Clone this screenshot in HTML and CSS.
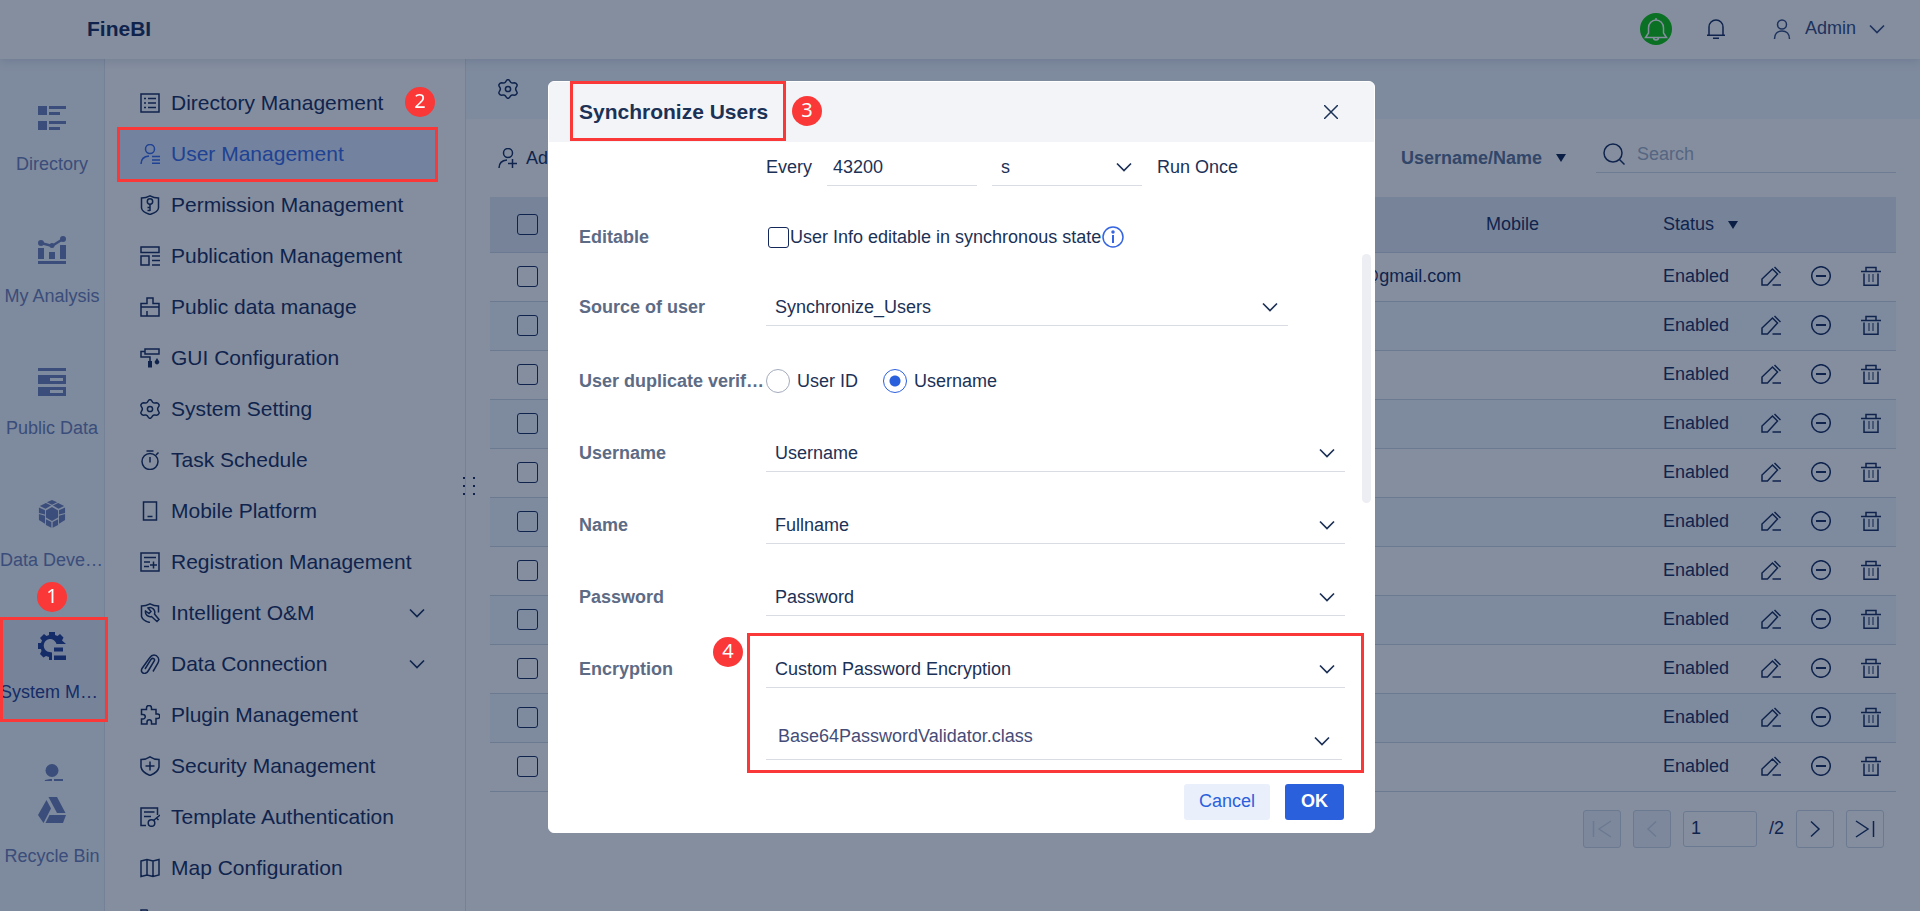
FILE: index.html
```html
<!DOCTYPE html>
<html lang="en">
<head>
    <meta charset="UTF-8">
    <meta name="viewport" content="width=device-width, initial-scale=1.0">
    <title>FineBI</title>
    <link rel="stylesheet" href="styles.css">
</head>
<body>
    <svg class="symbols" aria-hidden="true">
        <symbol id="chevron" viewBox="0 0 16 16"><path d="M1 4.500l7 7 7-7"/></symbol>
        <symbol id="gear" viewBox="0 0 20 20"><path d="M8.600 1.400Q10-.2 11.400 1.400L12.700 3.200q.8.900 2 .8l2-.2q1.600.2 2.300 1.800.4 1-.4 2l-.7 1.200q-.5 1.200 0 2.400l.7 1.200q.8 1 .4 2-.7 1.600-2.300 1.800l-2-.2q-1.200-.1-2 .8l-1.300 1.800Q10 20.200 8.600 18.600L7.300 16.800q-.8-.9-2-.8l-2 .2Q1.700 16 1 14.400q-.4-1 .4-2l.7-1.200q.5-1.200 0-2.400l-.7-1.200q-.8-1-.4-2Q1.700 4 3.300 3.800l2 .2q1.200.1 2-.8z"/><circle cx="10" cy="10" r="2.600"/></symbol>
        <symbol id="edit" viewBox="0 0 20 20"><path d="M1 19v-6L11.500 3l5 5L6.500 19zM13.500 1l6 6M11.500 19H20"/></symbol>
        <symbol id="minus" viewBox="0 0 20 20"><circle cx="10" cy="10" r="9.300"/><path d="M5 10h10" stroke-width="2"/></symbol>
        <symbol id="trash" viewBox="0 0 20 20"><path d="M0 5.500h20M5 5V1.500h10V5M3 7.500v11.700h14V7.500"/><path d="M8 8v8M12 8v8" stroke-width="1"/></symbol>
    </svg>

    <header class="topbar">
        <div class="brand">FineBI</div>
        <button class="icon-button" aria-label="Support">
            <svg class="support-bell" viewBox="0 0 32 32"><circle class="bell-disc" cx="16" cy="16" r="16"/><path d="M16 5v2M8.500 20V15a7.500 8 0 0 1 15 0v5l3 4.500h-21zM13.500 24.500a2.500 2.500 0 0 0 5 0"/></svg>
        </button>
        <button class="icon-button" aria-label="Notifications">
            <svg class="icon" viewBox="0 0 20 20"><path d="M3 16V8a7 7 0 0 1 14 0v8M1 16.300h18M7 19.300h6"/></svg>
        </button>
        <button class="icon-button account">
            <svg class="icon" viewBox="0 0 20 20"><circle cx="10" cy="5.500" r="4.500"/><path d="M2.500 20c0-5 3-8 7.500-8s7.500 3 7.500 8"/></svg>
            <span>Admin</span>
            <svg class="chevron"><use href="#chevron"/></svg>
        </button>
    </header>

    <div class="workspace">
        <nav class="rail">
            <div class="rail-items">
                <a class="rail-item" href="#">
                    <svg class="rail-icon" viewBox="0 0 28 28"><path d="M0 2h9v9H0zM11 2h17v3H11zM11 8h11v3H11zM0 17h9v9H0zM11 17h17v3H11zM11 23h11v3H11z"/></svg>
                    <span>Directory</span>
                </a>
                <a class="rail-item" href="#">
                    <svg class="rail-icon" viewBox="0 0 28 28"><path d="M0 12h6v11H0zM11 16h6v7h-6zM22 9h6v14h-6zM0 25h28v3H0z"/><circle cx="3" cy="7" r="3"/><circle cx="14" cy="9.500" r="2.500"/><circle cx="25" cy="3" r="3"/><path class="rail-line" d="M3 7l11 3L25 3"/></svg>
                    <span>My Analysis</span>
                </a>
                <a class="rail-item" href="#">
                    <svg class="rail-icon" viewBox="0 0 28 28"><path fill-rule="evenodd" d="M0 0h28v3H0zM0 7h28v9H0zM12 10v3h13v-3zM0 19h28v9H0zM12 22v3h13v-3z"/></svg>
                    <span>Public Data</span>
                </a>
                <a class="rail-item" href="#">
                    <svg class="rail-icon" viewBox="0 0 28 30"><path d="M14 0l5.500 2.500L14 5 8.500 2.500zM7.500 3.200L13 6 7 9.500 1 6.500zM20.500 3.200L27 6.500l-6 3L15 6zM14 7.500l6.500 3.700v7.600L14 22.500l-6.500-3.700v-7.600zM0 8l6.500 3v4.500L0 14zM28 8l-6.500 3v4.500L28 14zM0 15l6.500 2v8.500L0 21.500zM28 15l-6.500 2v8.500l6.500-4zM7.500 20.500l5.800 3.200v6l-5.800-3zM20.500 20.500l-5.800 3.200v6l5.800-3z"/></svg>
                    <span>Data Development</span>
                </a>
                <a class="rail-item active" href="#">
                    <svg class="rail-icon" viewBox="0 0 28 28"><path d="M11 0h6v3l2.500 1L22 2l3.500 3.500-1.500 3 4 3.500H18.500a6.500 6.500 0 1 0-7 8l2.500.500v7.500h-3v-3L8 24l-2.500 1.500L2 22l1.500-3L3 17H0v-6h3l1-2.500L2 6l4-4 2.500 2L11 3zM16 15.500h9v4h-9zM16 23.500h12v4.500H16z"/></svg>
                    <span>System Management</span>
                </a>
                <a class="rail-item" href="#">
                    <svg class="rail-icon" viewBox="0 0 28 28"><circle cx="14" cy="6.500" r="6.500"/><path d="M7 16l5-1h2v13H4zM16 15h9v3h-9z"/></svg>
                </a>
            </div>
            <a class="rail-item recycle" href="#">
                <svg class="rail-icon" viewBox="0 0 28 28"><path d="M10.500 1h8.500l8.500 16h-8.500zM8.500 4l4.500 8.500L5.500 27 0 19zM11.500 19H28l-3 8H7.500z"/></svg>
                <span>Recycle Bin</span>
            </a>
        </nav>

        <nav class="menu">
            <a class="menu-item" href="#">
                <svg class="icon" viewBox="0 0 20 20"><path d="M1 1h18v18H1zM4 5.500h2M8 5.500h8M4 10h2M8 10h8M4 14.500h2M8 14.500h8"/></svg>
                <span>Directory Management</span>
            </a>
            <a class="menu-item active" href="#">
                <svg class="icon" viewBox="0 0 20 20"><circle cx="10" cy="5" r="4.500"/><path d="M1 20c0-4 2.500-7.500 8-8M12 12.500h8M12 16h8M12 19.300h8"/></svg>
                <span>User Management</span>
            </a>
            <a class="menu-item" href="#">
                <svg class="icon" viewBox="0 0 20 20"><path d="M1.500 3Q6 3 10 .8 14 3 18.500 3v10Q18 17 10 19.500 2 17 1.500 13zM10 9v7M10 12.500H7.500M10 15.500H7.500"/><circle cx="10" cy="6.500" r="2.700"/></svg>
                <span>Permission Management</span>
            </a>
            <a class="menu-item" href="#">
                <svg class="icon" viewBox="0 0 20 20"><path d="M1 1h18v5.500H1zM1 10h8v9H1zM12 10h8M12 14.500h8M12 19h8"/></svg>
                <span>Publication Management</span>
            </a>
            <a class="menu-item" href="#">
                <svg class="icon" viewBox="0 0 20 20"><path d="M1 10V6.500h6V1h6v5.500h6V10M1 10h18v9H1zM7 14v5"/></svg>
                <span>Public data manage</span>
            </a>
            <a class="menu-item" href="#">
                <svg class="icon" viewBox="0 0 20 20"><path d="M5 1h14v5H5zM5 3.500H1V9h9v4"/><path class="solid" d="M8 13h4v6.500H8zM17 10l2.500 4q-1 2.500-2.500 2.500T14.500 14z"/></svg>
                <span>GUI Configuration</span>
            </a>
            <a class="menu-item" href="#">
                <svg class="icon"><use href="#gear"/></svg>
                <span>System Setting</span>
            </a>
            <a class="menu-item" href="#">
                <svg class="icon" viewBox="0 0 20 20"><circle cx="10" cy="11.500" r="8"/><path d="M6.500 1h7M10 7v5.500M16 5l2.500-2.500"/></svg>
                <span>Task Schedule</span>
            </a>
            <a class="menu-item" href="#">
                <svg class="icon" viewBox="0 0 20 20"><path d="M3.500 1h13v18h-13zM7.500 15.500h5"/></svg>
                <span>Mobile Platform</span>
            </a>
            <a class="menu-item" href="#">
                <svg class="icon" viewBox="0 0 20 20"><path d="M1 1h18v18H1zM4 5.500h12M4 10h6M4 14.500h5M10 13h7M13.500 9.500v7"/></svg>
                <span>Registration Management</span>
            </a>
            <a class="menu-item" href="#">
                <svg class="icon" viewBox="0 0 20 20"><path d="M18.500 9.500V3Q14 3 10 .8 6 3 1.500 3v10.500q1.500 4.500 8.500 6M8 5a4.800 4.800 0 0 1 6.500 6l4.500 5.500-2 2-5.500-5A4.800 4.800 0 0 1 5.500 8L9 10.500 11 8.500z"/></svg>
                <span>Intelligent O&amp;M</span>
                <svg class="chevron"><use href="#chevron"/></svg>
            </a>
            <a class="menu-item" href="#">
                <svg class="icon" viewBox="0 0 20 20"><path d="M13 17.500l5-8.500c2-4-.5-8-4-8-2 0-3.500 1.500-4.500 3L2 14.500c-1.500 2.500.2 4.700 2.200 4.900s3.300-1.200 4.300-2.900l6-10c.5-2-2.500-3-3.500-1l-6 9.500"/></svg>
                <span>Data Connection</span>
                <svg class="chevron"><use href="#chevron"/></svg>
            </a>
            <a class="menu-item" href="#">
                <svg class="icon" viewBox="0 0 20 20"><path d="M1.500 4.500h5V3a2.500 2.500 0 0 1 5 0v1.500H16V9h1.500a2.300 2.300 0 0 1 0 4.600H16v5.400h-4.500v-2a2 2 0 0 0-4.500 0v2H1.500v-5H3a2.200 2.200 0 0 0 0-4.500H1.500z"/></svg>
                <span>Plugin Management</span>
            </a>
            <a class="menu-item" href="#">
                <svg class="icon" viewBox="0 0 20 20"><path d="M1 3.500Q6 3.500 10 .800q4 2.700 9 2.700V11q-1 5.500-9 8.500Q2 16.500 1 11zM10 5.500v9M5.500 10h9"/></svg>
                <span>Security Management</span>
            </a>
            <a class="menu-item" href="#">
                <svg class="icon" viewBox="0 0 20 20"><path d="M6 18.500H1V1h16.500v7M4 5h10.500M4 9.500h7M13.500 13.500L20 8M16.500 11l2 2"/><circle cx="11.500" cy="16" r="3.300"/></svg>
                <span>Template Authentication</span>
            </a>
            <a class="menu-item" href="#">
                <svg class="icon" viewBox="0 0 20 20"><path d="M1 3l6-1.500L13 3l6-1.500V17l-6 1.500L7 17l-6 1.500zM7 1.500V17M13 3v15.500"/></svg>
                <span>Map Configuration</span>
            </a>
            <a class="menu-item" href="#">
                <svg class="icon" viewBox="0 0 20 20"><path d="M1 19V1h6l2 4h10v14z"/></svg>
            </a>
        </nav>

        <main class="content">
            <svg class="drag-handle" viewBox="0 0 12 20"><path d="M0 1h2M10 1h2M0 9h2M10 9h2M0 17h2M10 17h2"/></svg>
            <div class="settings-bar">
                <button class="icon-button" aria-label="Settings"><svg class="icon"><use href="#gear"/></svg></button>
            </div>
            <div class="toolbar">
                <button class="icon-button add-user">
                    <svg class="icon" viewBox="0 0 20 20"><circle cx="10" cy="5" r="4.500"/><path d="M1 20c0-4 2.500-7.500 8-8M10 15.500h9M14.500 11v9"/></svg>
                    <span>Add User</span>
                </button>
                <button class="icon-button filter">Username/Name <span class="caret"></span></button>
                <label class="search">
                    <svg class="search-icon" viewBox="0 0 22 22"><circle cx="10" cy="10" r="9"/><path d="M16.500 16.500l5 5"/></svg>
                    <input type="text" placeholder="Search" aria-label="Search">
                </label>
            </div>

            <table class="users">
                <colgroup>
                    <col class="col-check"><col><col class="col-email"><col class="col-mobile"><col class="col-status"><col class="col-actions">
                </colgroup>
                <thead>
                    <tr><th><input type="checkbox" aria-label="Select all"></th><th></th><th></th><th>Mobile</th><th>Status <span class="caret"></span></th><th></th></tr>
                </thead>
                <tbody>
                    <tr>
                        <td><input type="checkbox" aria-label="Select row"></td><td></td><td>@gmail.com</td><td></td><td>Enabled</td>
                        <td><div class="actions"><button aria-label="Edit"><svg class="icon"><use href="#edit"/></svg></button><button aria-label="Disable"><svg class="icon"><use href="#minus"/></svg></button><button aria-label="Delete"><svg class="icon"><use href="#trash"/></svg></button></div></td>
                    </tr>
                    <tr>
                        <td><input type="checkbox" aria-label="Select row"></td><td></td><td></td><td></td><td>Enabled</td>
                        <td><div class="actions"><button aria-label="Edit"><svg class="icon"><use href="#edit"/></svg></button><button aria-label="Disable"><svg class="icon"><use href="#minus"/></svg></button><button aria-label="Delete"><svg class="icon"><use href="#trash"/></svg></button></div></td>
                    </tr>
                    <tr>
                        <td><input type="checkbox" aria-label="Select row"></td><td></td><td></td><td></td><td>Enabled</td>
                        <td><div class="actions"><button aria-label="Edit"><svg class="icon"><use href="#edit"/></svg></button><button aria-label="Disable"><svg class="icon"><use href="#minus"/></svg></button><button aria-label="Delete"><svg class="icon"><use href="#trash"/></svg></button></div></td>
                    </tr>
                    <tr>
                        <td><input type="checkbox" aria-label="Select row"></td><td></td><td></td><td></td><td>Enabled</td>
                        <td><div class="actions"><button aria-label="Edit"><svg class="icon"><use href="#edit"/></svg></button><button aria-label="Disable"><svg class="icon"><use href="#minus"/></svg></button><button aria-label="Delete"><svg class="icon"><use href="#trash"/></svg></button></div></td>
                    </tr>
                    <tr>
                        <td><input type="checkbox" aria-label="Select row"></td><td></td><td></td><td></td><td>Enabled</td>
                        <td><div class="actions"><button aria-label="Edit"><svg class="icon"><use href="#edit"/></svg></button><button aria-label="Disable"><svg class="icon"><use href="#minus"/></svg></button><button aria-label="Delete"><svg class="icon"><use href="#trash"/></svg></button></div></td>
                    </tr>
                    <tr>
                        <td><input type="checkbox" aria-label="Select row"></td><td></td><td></td><td></td><td>Enabled</td>
                        <td><div class="actions"><button aria-label="Edit"><svg class="icon"><use href="#edit"/></svg></button><button aria-label="Disable"><svg class="icon"><use href="#minus"/></svg></button><button aria-label="Delete"><svg class="icon"><use href="#trash"/></svg></button></div></td>
                    </tr>
                    <tr>
                        <td><input type="checkbox" aria-label="Select row"></td><td></td><td></td><td></td><td>Enabled</td>
                        <td><div class="actions"><button aria-label="Edit"><svg class="icon"><use href="#edit"/></svg></button><button aria-label="Disable"><svg class="icon"><use href="#minus"/></svg></button><button aria-label="Delete"><svg class="icon"><use href="#trash"/></svg></button></div></td>
                    </tr>
                    <tr>
                        <td><input type="checkbox" aria-label="Select row"></td><td></td><td></td><td></td><td>Enabled</td>
                        <td><div class="actions"><button aria-label="Edit"><svg class="icon"><use href="#edit"/></svg></button><button aria-label="Disable"><svg class="icon"><use href="#minus"/></svg></button><button aria-label="Delete"><svg class="icon"><use href="#trash"/></svg></button></div></td>
                    </tr>
                    <tr>
                        <td><input type="checkbox" aria-label="Select row"></td><td></td><td></td><td></td><td>Enabled</td>
                        <td><div class="actions"><button aria-label="Edit"><svg class="icon"><use href="#edit"/></svg></button><button aria-label="Disable"><svg class="icon"><use href="#minus"/></svg></button><button aria-label="Delete"><svg class="icon"><use href="#trash"/></svg></button></div></td>
                    </tr>
                    <tr>
                        <td><input type="checkbox" aria-label="Select row"></td><td></td><td></td><td></td><td>Enabled</td>
                        <td><div class="actions"><button aria-label="Edit"><svg class="icon"><use href="#edit"/></svg></button><button aria-label="Disable"><svg class="icon"><use href="#minus"/></svg></button><button aria-label="Delete"><svg class="icon"><use href="#trash"/></svg></button></div></td>
                    </tr>
                    <tr>
                        <td><input type="checkbox" aria-label="Select row"></td><td></td><td></td><td></td><td>Enabled</td>
                        <td><div class="actions"><button aria-label="Edit"><svg class="icon"><use href="#edit"/></svg></button><button aria-label="Disable"><svg class="icon"><use href="#minus"/></svg></button><button aria-label="Delete"><svg class="icon"><use href="#trash"/></svg></button></div></td>
                    </tr>
                </tbody>
            </table>

            <div class="pagination">
                <button disabled aria-label="First page"><svg class="icon" viewBox="0 0 20 20"><path d="M1.500 2v16M19 2L7 10l12 8"/></svg></button>
                <button disabled aria-label="Previous page"><svg class="icon" viewBox="0 0 20 20"><path d="M14 2.500L6 10l8 7.500"/></svg></button>
                <input type="text" value="1" aria-label="Page">
                <span>/2</span>
                <button aria-label="Next page"><svg class="icon" viewBox="0 0 20 20"><path d="M6 2.500l8 7.500-8 7.500"/></svg></button>
                <button aria-label="Last page"><svg class="icon" viewBox="0 0 20 20"><path d="M18.500 2v16M1 2l12 8-12 8"/></svg></button>
            </div>
        </main>
    </div>

    <div class="overlay">
        <div class="mark mark-system"></div>
        <div class="badge badge-1">1</div>
        <div class="mark mark-user"></div>
        <div class="badge badge-2">2</div>

        <div class="dialog" role="dialog" aria-labelledby="dialogTitle">
            <div class="dialog-header">
                <h2 id="dialogTitle">Synchronize Users</h2>
                <button class="icon-button" aria-label="Close"><svg class="close" viewBox="0 0 14 14"><path d="M0 0l14 14M14 0L0 14"/></svg></button>
            </div>

            <div class="dialog-body">
                <div class="form-row tight">
                    <span class="form-label"></span>
                    <div class="field">
                        <label for="interval">Every</label>
                        <input class="interval" type="text" id="interval" value="43200">
                        <div class="select unit">
                            <select aria-label="Unit"><option>s</option></select>
                            <svg class="chevron"><use href="#chevron"/></svg>
                        </div>
                        <span>Run Once</span>
                    </div>
                </div>
                <div class="form-row tight">
                    <span class="form-label">Editable</span>
                    <div class="field">
                        <input class="editable-box" type="checkbox" id="editable">
                        <label for="editable">User Info editable in synchronous state</label>
                        <svg class="info" viewBox="0 0 22 22"><circle cx="11" cy="11" r="10"/><path d="M11 9v8" stroke-width="2"/><circle class="info-dot" cx="11" cy="6" r="1"/></svg>
                    </div>
                </div>
                <div class="form-row loose">
                    <label class="form-label" for="source">Source of user</label>
                    <div class="field source">
                        <div class="select">
                            <select id="source"><option>Synchronize_Users</option></select>
                            <svg class="chevron"><use href="#chevron"/></svg>
                        </div>
                    </div>
                </div>
                <div class="form-row">
                    <span class="form-label">User duplicate verification</span>
                    <div class="field">
                        <label class="radio"><input type="radio" name="verify">User ID</label>
                        <label class="radio"><input type="radio" name="verify" checked>Username</label>
                    </div>
                </div>
                <div class="form-row">
                    <label class="form-label" for="username">Username</label>
                    <div class="field"><div class="select">
                        <select id="username"><option>Username</option></select>
                        <svg class="chevron"><use href="#chevron"/></svg>
                    </div></div>
                </div>
                <div class="form-row">
                    <label class="form-label" for="fullname">Name</label>
                    <div class="field"><div class="select">
                        <select id="fullname"><option>Fullname</option></select>
                        <svg class="chevron"><use href="#chevron"/></svg>
                    </div></div>
                </div>
                <div class="form-row">
                    <label class="form-label" for="password">Password</label>
                    <div class="field"><div class="select">
                        <select id="password"><option>Password</option></select>
                        <svg class="chevron"><use href="#chevron"/></svg>
                    </div></div>
                </div>
                <div class="form-row">
                    <label class="form-label" for="encryption">Encryption</label>
                    <div class="field"><div class="select">
                        <select id="encryption"><option>Custom Password Encryption</option></select>
                        <svg class="chevron"><use href="#chevron"/></svg>
                    </div></div>
                </div>
                <div class="form-row">
                    <span class="form-label"></span>
                    <div class="field"><div class="select validator">
                        <select aria-label="Validator class"><option>Base64PasswordValidator.class</option></select>
                        <svg class="chevron"><use href="#chevron"/></svg>
                    </div></div>
                </div>
            </div>

            <div class="dialog-footer">
                <button class="btn cancel">Cancel</button>
                <button class="btn ok">OK</button>
            </div>

            <div class="scroll-thumb"></div>
            <div class="mark mark-title"></div>
            <div class="badge badge-3">3</div>
            <div class="mark mark-encryption"></div>
            <div class="badge badge-4">4</div>
        </div>
    </div>
</body>
</html>
```

FILE: styles.css
```css
* {
    box-sizing: border-box;
}

body {
    font-family: "Liberation Sans", Arial, sans-serif;
    font-size: 18px;
    color: #14295a;
    background-color: #fff;
    margin: 0;
    height: 100vh;
    display: flex;
    flex-direction: column;
    overflow: hidden;
}

a {
    color: inherit;
    text-decoration: none;
}

button, input, select {
    font: inherit;
    color: inherit;
}

svg {
    fill: none;
    stroke: currentColor;
    flex-shrink: 0;
}

.symbols {
    position: absolute;
    width: 0;
    height: 0;
}

.icon {
    width: 20px;
    height: 20px;
    stroke-width: 1.5;
    display: block;
}

.chevron {
    width: 16px;
    height: 16px;
    stroke-width: 1.7;
}

.icon-button {
    display: flex;
    align-items: center;
    padding: 0;
    border: none;
    background: none;
    cursor: pointer;
}

.caret {
    display: inline-block;
    border: 5px solid transparent;
    border-top: 8px solid #0a1f4a;
    border-bottom: none;
    margin-left: 9px;
    vertical-align: 1px;
}

input[type="checkbox"] {
    appearance: none;
    width: 21px;
    height: 21px;
    margin: 0;
    border: 1px solid #14295a;
    border-radius: 3px;
    display: block;
}

/* top bar */
.topbar {
    height: 59px;
    flex-shrink: 0;
    display: flex;
    align-items: center;
    gap: 34px;
    padding: 0 35px 2px 87px;
    background-color: #fff;
    box-shadow: 0 2px 10px rgba(30, 50, 90, 0.15);
    position: relative;
    z-index: 1;
}

.brand {
    flex-grow: 1;
    font-size: 21px;
    font-weight: bold;
}

.support-bell {
    width: 32px;
    height: 32px;
    color: #fff;
    stroke-width: 1.5;
}

.bell-disc {
    fill: #0ac206;
    stroke: none;
}

.account {
    color: #33477a;
    margin-left: 12px;
    gap: 13px;
}

/* left navigation */
.workspace {
    flex-grow: 1;
    display: flex;
    min-height: 0;
}

.rail {
    width: 105px;
    flex-shrink: 0;
    display: flex;
    flex-direction: column;
    background-color: #f3f6fb;
    border-right: 1px solid #dfe4ee;
}

.rail-items {
    flex: 1;
    padding-top: 30px;
    display: flex;
    flex-direction: column;
    gap: 27px;
    overflow: hidden;
}

.rail-item {
    height: 105px;
    flex-shrink: 0;
    padding-top: 15px;
    color: #6c7cb4;
    text-align: center;
}

.rail-item.active {
    background-color: #e5e8f1;
    color: #1e3a90;
}

.rail-item.recycle {
    height: 130px;
}

.rail-item span {
    display: block;
    margin-top: 20px;
    line-height: 24px;
    overflow: hidden;
    white-space: nowrap;
    text-overflow: ellipsis;
}

.rail-icon {
    width: 28px;
    height: 28px;
    display: block;
    margin: 0 auto;
    fill: currentColor;
    stroke: none;
}

.rail-line {
    fill: none;
    stroke: currentColor;
    stroke-width: 2.5;
}

/* management menu */
.menu {
    width: 361px;
    flex-shrink: 0;
    padding: 18px 28px 0 15px;
    border-right: 1px solid #dfe4ee;
    overflow: hidden;
}

.menu-item {
    height: 51px;
    display: flex;
    align-items: center;
    gap: 11px;
    padding: 0 12px 0 20px;
    font-size: 21px;
}

.menu-item span {
    flex-grow: 1;
}

.menu-item.active {
    background-color: #dce6fc;
    color: #3566e8;
}

.solid {
    fill: currentColor;
    stroke: none;
}

/* content */
.content {
    flex-grow: 1;
    min-width: 0;
    position: relative;
}

.drag-handle {
    position: absolute;
    left: -3px;
    top: 418px;
    width: 12px;
    height: 20px;
    stroke-width: 2;
}

.settings-bar {
    height: 60px;
    display: flex;
    align-items: center;
    padding: 0 32px;
    background-color: #f3f6fb;
}

.toolbar {
    height: 78px;
    display: flex;
    align-items: center;
    padding: 0 24px 0 32px;
}

.add-user {
    flex-grow: 1;
    gap: 8px;
}

.filter {
    font-weight: bold;
    color: #5b6f92;
}

.filter .caret {
    margin-left: 14px;
}

.search {
    width: 300px;
    height: 36px;
    display: flex;
    align-items: center;
    gap: 12px;
    padding: 0 0 1px 7px;
    margin: 0 0 6px 30px;
    border-bottom: 1px solid #d2dae6;
}

.search-icon {
    width: 22px;
    height: 22px;
    stroke-width: 1.5;
}

.search input {
    flex: 1;
    min-width: 0;
    padding: 0;
    border: none;
    outline: none;
    background: none;
}

.search input::placeholder {
    color: #a3aec2;
    opacity: 1;
}

.users {
    width: calc(100% - 48px);
    margin: 0 24px;
    table-layout: fixed;
    border-collapse: collapse;
}

.col-check {
    width: 75px;
}

.col-email {
    width: 125px;
}

.col-mobile {
    width: 177px;
}

.col-status {
    width: 98px;
}

.col-actions {
    width: 135px;
}

.users th, .users td {
    height: 49px;
    padding: 0;
    font-weight: normal;
    text-align: left;
    white-space: nowrap;
    border-bottom: 1px solid #ccd4e2;
}

.users th {
    height: 55px;
    background-color: #e4e8f2;
}

.users tbody tr:nth-child(even) {
    background-color: #f3f6fb;
}

.users input {
    margin-left: 27px;
}

.actions {
    display: flex;
    gap: 30px;
    padding-bottom: 2px;
}

.actions button {
    padding: 0;
    border: none;
    background: none;
}

.pagination {
    display: flex;
    align-items: center;
    justify-content: flex-end;
    gap: 12px;
    padding: 18px 36px 0 0;
}

.pagination button {
    width: 38px;
    height: 38px;
    padding: 8px;
    border: 1px solid #ccd4e2;
    border-radius: 3px;
    background: none;
}

.pagination button:disabled {
    background-color: #f0f3f8;
    color: #ccd4e2;
}

.pagination input {
    width: 74px;
    height: 36px;
    padding: 0 7px;
    border: 1px solid #ccd4e2;
    border-radius: 3px;
    background: none;
}

/* dialog */
.overlay {
    position: fixed;
    inset: 0;
    z-index: 2;
    display: flex;
    justify-content: center;
    align-items: flex-start;
    padding: 81px 0 0 3px;
    background-color: rgba(10, 30, 64, 0.5);
}

.dialog {
    position: relative;
    width: 827px;
    background-color: #fff;
    border: 1px solid #fff;
    border-radius: 6px;
    color: #1c3156;
}

.dialog-header {
    height: 60px;
    display: flex;
    align-items: center;
    justify-content: space-between;
    padding: 0 36px 0 30px;
    background-color: #f2f4f8;
    border-radius: 5px 5px 0 0;
}

.dialog-header h2 {
    font-size: 21px;
    margin: 0;
}

.close {
    width: 14px;
    height: 14px;
    stroke-width: 1.5;
}

.dialog-body {
    padding: 8px 29px 0 30px;
}

.form-row {
    display: flex;
    align-items: center;
    height: 36px;
    margin-bottom: 36px;
    line-height: 34px;
}

.form-row.tight {
    margin-bottom: 34px;
}

.form-row.loose {
    margin-bottom: 38px;
}

.form-row:last-child {
    margin-bottom: 0;
}

.form-label {
    width: 187px;
    height: 36px;
    flex-shrink: 0;
    font-weight: bold;
    color: #5d6b85;
    overflow: hidden;
    white-space: nowrap;
    text-overflow: ellipsis;
}

.field {
    flex: 1;
    height: 36px;
    display: flex;
    align-items: center;
    padding-bottom: 2px;
}

.field.source {
    padding-right: 57px;
}

.select {
    flex: 1;
    height: 36px;
    display: grid;
    align-items: center;
    align-self: flex-start;
    border-bottom: 1px solid #d9dce3;
}

.select select, .select .chevron {
    grid-area: 1 / 1;
}

.select select {
    appearance: none;
    align-self: start;
    width: 100%;
    height: 34px;
    padding: 0 30px 0 9px;
    border: none;
    background: none;
    outline: none;
}

.select .chevron {
    justify-self: end;
    margin: 0 10px 2px 0;
    pointer-events: none;
}

.select.unit {
    flex: none;
    width: 150px;
    margin-right: 15px;
}

.select.validator {
    margin-right: 3px;
}

.validator select {
    height: 24px;
    padding-left: 12px;
    line-height: 22px;
    color: #454c78;
}

.select.validator .chevron {
    margin: 0 12px 2px 0;
}

.interval {
    width: 150px;
    height: 36px;
    align-self: flex-start;
    margin: 0 15px;
    padding: 0 6px;
    border: none;
    border-bottom: 1px solid #d9dce3;
}

.dialog .editable-box {
    margin: 0 1px 0 2px;
}

.info {
    width: 22px;
    height: 22px;
    margin-left: 1px;
    color: #3565e0;
    stroke-width: 1.5;
}

.info-dot {
    fill: #3565e0;
}

.radio {
    display: flex;
    align-items: center;
    gap: 7px;
    margin-right: 25px;
}

.radio input {
    appearance: none;
    width: 24px;
    height: 24px;
    margin: 0;
    border: 1px solid #a3abbb;
    border-radius: 50%;
}

.radio input:checked {
    border-color: #2b60dd;
    background: radial-gradient(circle, #2b60dd 5px, transparent 6px);
}

.dialog-footer {
    display: flex;
    justify-content: flex-end;
    gap: 15px;
    padding: 24px 30px 12px;
}

.btn {
    height: 36px;
    padding: 0 16px 2px;
    border: none;
    border-radius: 3px;
    cursor: pointer;
}

.cancel {
    padding: 0 15px 2px;
    background-color: #e9effb;
    color: #2b60dd;
}

.ok {
    background-color: #2b60dd;
    color: #fff;
    font-weight: bold;
}

.scroll-thumb {
    position: absolute;
    top: 172px;
    right: 3px;
    width: 9px;
    height: 249px;
    border-radius: 5px;
    background-color: #edeef3;
}

/* step marks */
.mark {
    position: absolute;
    border: 3px solid #fa3838;
    pointer-events: none;
}

.badge {
    position: absolute;
    width: 30px;
    height: 30px;
    border-radius: 50%;
    background-color: #fa3838;
    color: #fff;
    font: 20px/28px "Noto Sans", sans-serif;
    text-align: center;
}

.mark-system {
    left: 0;
    top: 617px;
    width: 108px;
    height: 105px;
}

.badge-1 {
    left: 37px;
    top: 582px;
}

.mark-user {
    left: 117px;
    top: 127px;
    width: 321px;
    height: 55px;
}

.badge-2 {
    left: 405px;
    top: 87px;
}

.mark-title {
    left: 21px;
    top: -1px;
    width: 216px;
    height: 60px;
}

.badge-3 {
    left: 243px;
    top: 14px;
}

.mark-encryption {
    left: 198px;
    top: 551px;
    width: 617px;
    height: 140px;
}

.badge-4 {
    left: 164px;
    top: 555px;
}
```
